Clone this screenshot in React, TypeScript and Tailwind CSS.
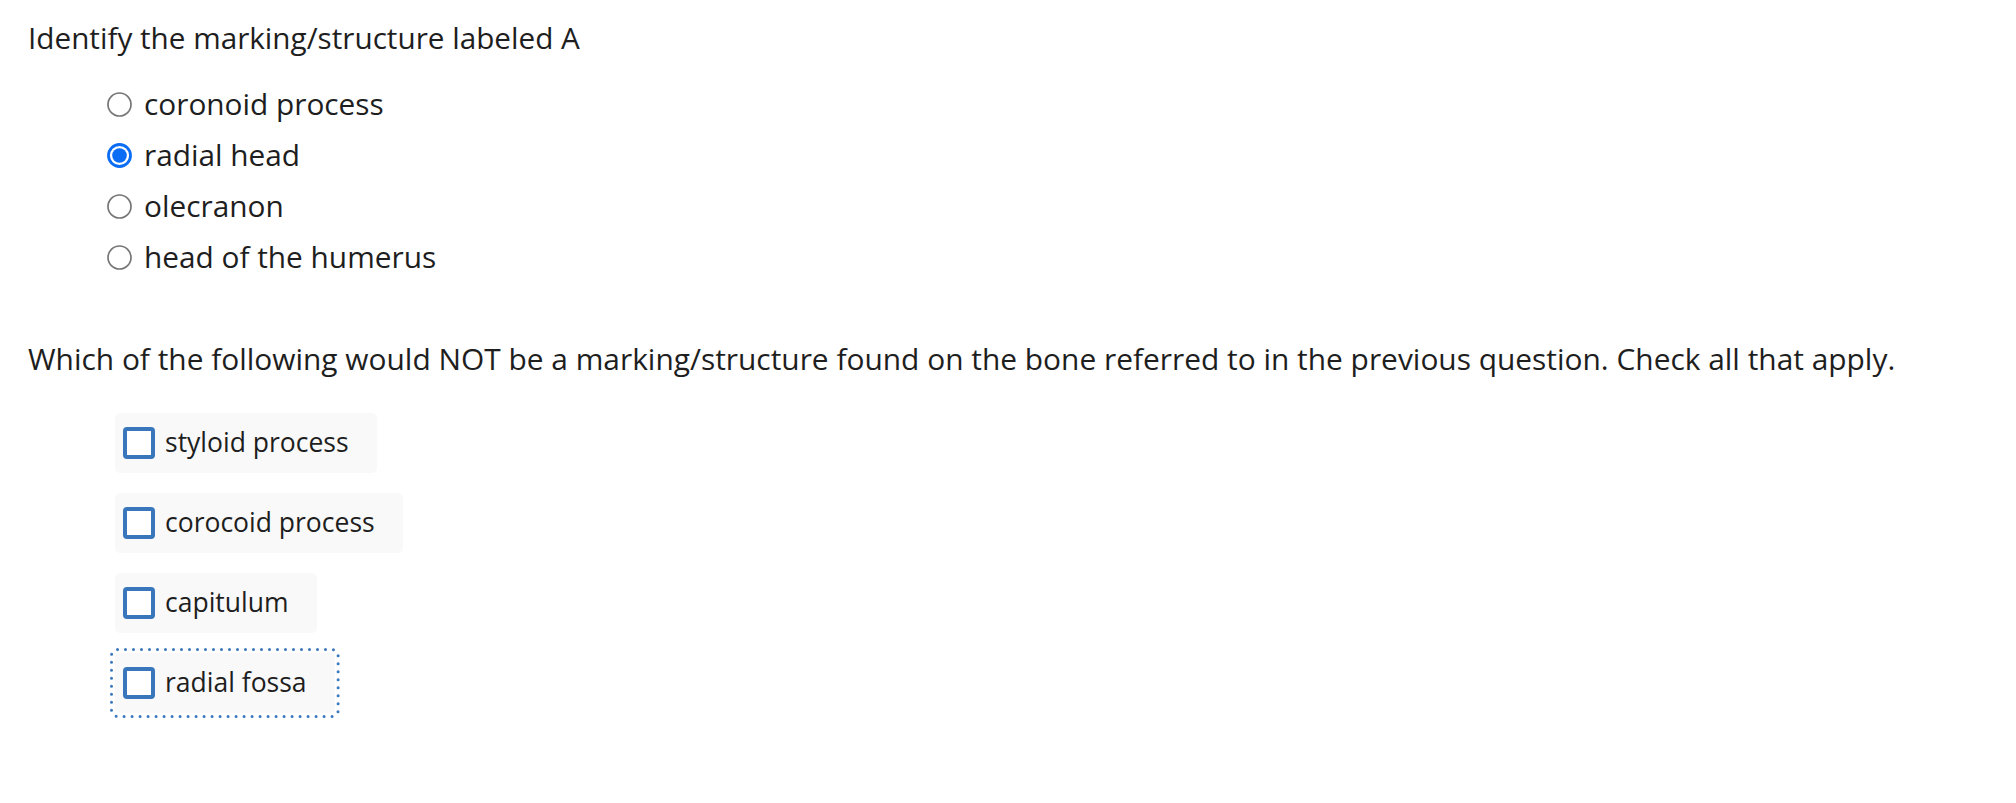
import React from "react";

const options = ["coronoid process", "radial head", "olecranon", "head of the humerus"];
const choices = ["styloid process", "corocoid process", "capitulum", "radial fossa"];

function Radio({ checked }: { checked: boolean }) {
  return (
    <svg width="25" height="25" viewBox="0 0 25 25" className="shrink-0">
      {checked ? (
        <>
          <circle cx="12.5" cy="12.5" r="11" fill="#fff" stroke="#0b6cf4" strokeWidth="2.8" />
          <circle cx="12.5" cy="12.5" r="7.3" fill="#0b6cf4" />
        </>
      ) : (
        <circle cx="12.5" cy="12.5" r="11.5" fill="#fff" stroke="#767676" strokeWidth="1.7" />
      )}
    </svg>
  );
}

// dotted focus ring drawn around the active choice
function FocusRing() {
  return (
    <svg className="pointer-events-none absolute -inset-[5px] h-[calc(100%+10px)] w-[calc(100%+10px)] overflow-visible">
      <rect
        x="1.5"
        y="1.5"
        width="calc(100% - 3px)"
        height="calc(100% - 3px)"
        rx="6"
        fill="none"
        stroke="#3a76bc"
        strokeWidth="3"
        strokeLinecap="round"
        strokeDasharray="0 8"
      />
    </svg>
  );
}

export default function App() {
  return (
    <div
      className="min-h-screen bg-white px-[28px] pt-[18px] text-[#1e1e1e]"
      style={{ fontFamily: '"Open Sans", "Liberation Sans", sans-serif' }}
    >
      {/* Question 1 */}
      <p className="text-[29.7px] leading-[40px]">Identify the marking/structure labeled A</p>
      <div className="mt-[21px] pl-[79px]">
        {options.map((o, i) => (
          <label key={o} className="flex h-[51px] items-center gap-[12px] text-[29.8px]">
            <Radio checked={i === 1} />
            <span>{o}</span>
          </label>
        ))}
      </div>

      {/* Question 2 */}
      <p className="mt-[56px] text-[29.9px] leading-[40px]">
        Which of the following would NOT be a marking/structure found on the bone referred to in the previous
        question. Check all that apply.
      </p>
      <div className="mt-[34px] flex flex-col items-start gap-5 pl-[87px]">
        {choices.map((c, i) => (
          <label
            key={c}
            className="relative flex h-[60px] items-center gap-[10px] rounded-[5px] bg-[#f9f9f9] pl-2 pr-[28px] text-[26.5px]"
          >
            <span className="h-8 w-8 shrink-0 rounded-[4px] border-4 border-[#3a76bc] bg-white" />
            <span>{c}</span>
            {i === 3 && <FocusRing />}
          </label>
        ))}
      </div>
    </div>
  );
}
